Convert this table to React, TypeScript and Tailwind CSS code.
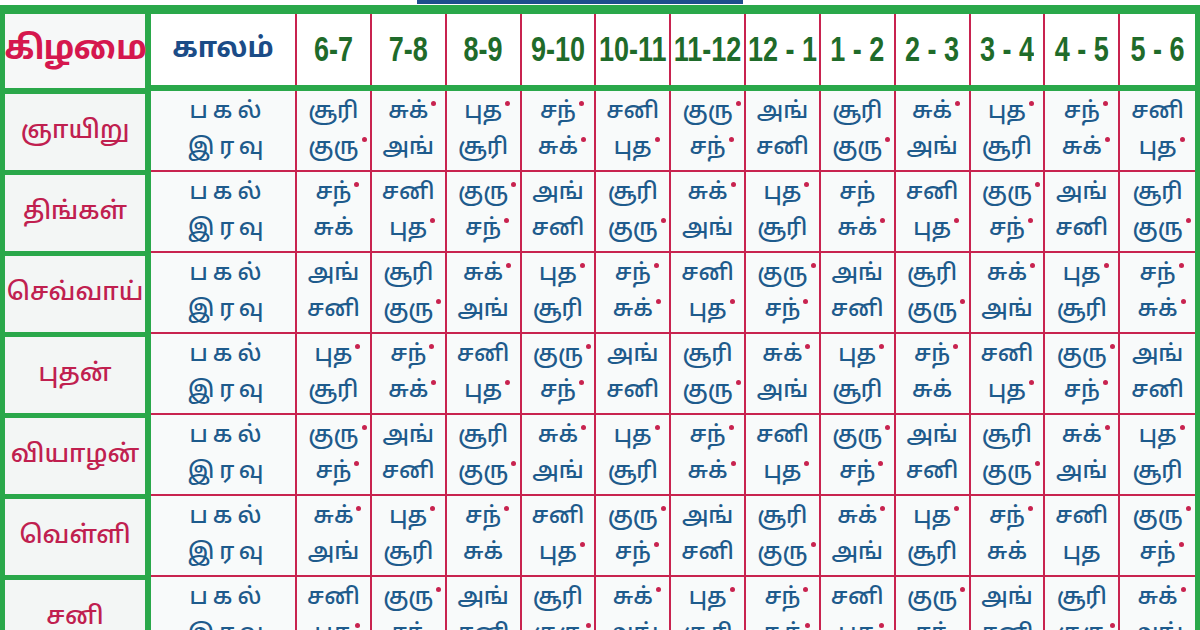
const hours = ['6-7', '7-8', '8-9', '9-10', '10-11', '11-12', '12 - 1', '1 - 2', '2 - 3', '3 - 4', '4 - 5', '5 - 6']

// "*" marks a red dot after the planet name
const rows: { day: string; pagal: string[]; iravu: string[] }[] = [
  {
    day: 'ஞாயிறு',
    pagal: ['சூரி', 'சுக்*', 'புத*', 'சந்*', 'சனி', 'குரு*', 'அங்', 'சூரி', 'சுக்*', 'புத*', 'சந்*', 'சனி'],
    iravu: ['குரு*', 'அங்', 'சூரி', 'சுக்*', 'புத*', 'சந்*', 'சனி', 'குரு*', 'அங்', 'சூரி', 'சுக்*', 'புத*'],
  },
  {
    day: 'திங்கள்',
    pagal: ['சந்*', 'சனி', 'குரு*', 'அங்', 'சூரி', 'சுக்*', 'புத*', 'சந்', 'சனி', 'குரு*', 'அங்', 'சூரி'],
    iravu: ['சுக்', 'புத*', 'சந்*', 'சனி', 'குரு*', 'அங்', 'சூரி', 'சுக்*', 'புத*', 'சந்*', 'சனி', 'குரு*'],
  },
  {
    day: 'செவ்வாய்',
    pagal: ['அங்', 'சூரி', 'சுக்*', 'புத*', 'சந்*', 'சனி', 'குரு*', 'அங்', 'சூரி', 'சுக்*', 'புத*', 'சந்*'],
    iravu: ['சனி', 'குரு*', 'அங்', 'சூரி', 'சுக்*', 'புத*', 'சந்*', 'சனி', 'குரு*', 'அங்', 'சூரி', 'சுக்*'],
  },
  {
    day: 'புதன்',
    pagal: ['புத*', 'சந்*', 'சனி', 'குரு*', 'அங்', 'சூரி', 'சுக்*', 'புத*', 'சந்*', 'சனி', 'குரு*', 'அங்'],
    iravu: ['சூரி', 'சுக்*', 'புத*', 'சந்*', 'சனி', 'குரு*', 'அங்', 'சூரி', 'சுக்', 'புத*', 'சந்*', 'சனி'],
  },
  {
    day: 'வியாழன்',
    pagal: ['குரு*', 'அங்', 'சூரி', 'சுக்*', 'புத*', 'சந்*', 'சனி', 'குரு*', 'அங்', 'சூரி', 'சுக்*', 'புத*'],
    iravu: ['சந்*', 'சனி', 'குரு*', 'அங்', 'சூரி', 'சுக்*', 'புத*', 'சந்*', 'சனி', 'குரு*', 'அங்', 'சூரி'],
  },
  {
    day: 'வெள்ளி',
    pagal: ['சுக்*', 'புத*', 'சந்*', 'சனி', 'குரு*', 'அங்', 'சூரி', 'சுக்*', 'புத*', 'சந்*', 'சனி', 'குரு*'],
    iravu: ['அங்', 'சூரி', 'சுக்', 'புத*', 'சந்*', 'சனி', 'குரு*', 'அங்', 'சூரி', 'சுக்', 'புத', 'சந்*'],
  },
  {
    day: 'சனி',
    pagal: ['சனி', 'குரு*', 'அங்', 'சூரி', 'சுக்*', 'புத*', 'சந்*', 'சனி', 'குரு*', 'அங்', 'சூரி', 'சுக்*'],
    iravu: ['புத*', 'சந்', 'சனி', 'குரு*', 'அங்', 'சூரி', 'சுக்*', 'புத*', 'சந்', 'சனி', 'குரு*', 'அங்'],
  },
]

function Planet({ name }: { name: string }) {
  const dot = name.endsWith('*')
  return (
    <span className="relative inline-block">
      {dot ? name.slice(0, -1) : name}
      {dot && (
        <span className="absolute -right-[8px] top-[6px] h-[5px] w-[5px] rounded-full bg-[#c8234f]" />
      )}
    </span>
  )
}

export default function App() {
  return (
    <div className="h-[630px] w-[1200px] overflow-hidden bg-white font-['Noto_Sans_Tamil','Lohit_Tamil','Noto_Sans',sans-serif]">
      {/* top banner edge */}
      <div className="flex h-[5px]">
        <div className="ml-[417px] h-[4px] w-[326px] bg-[#1d4e8c]" />
      </div>

      <div className="flex border-x-[5px] border-t-[9px] border-[#2aa84a] bg-[#2aa84a]">
        {/* day column */}
        <div className="flex w-[141px] flex-col gap-[5px] bg-[#2aa84a] pr-[1px]">
          <div className="mb-[1px] flex h-[74px] items-center justify-center bg-[#f6f8f8] text-[33px] font-bold tracking-[-1px] text-[#d5174e]">
            கிழமை
          </div>
          {rows.map((r) => (
            <div
              key={r.day}
              className="flex h-[76px] shrink-0 items-center justify-center bg-[#f3f6f5] text-[25px] font-medium text-[#c0204f]"
            >
              {r.day}
            </div>
          ))}
        </div>

        {/* hours table */}
        <div className="ml-[5px] flex flex-1 flex-col bg-[#f8fafa]">
          <div className="grid h-[77px] grid-cols-[146px_repeat(12,1fr)] border-b-[6px] border-[#2aa84a] bg-white">
            <div className="flex items-center justify-center border-r-2 border-[#c8234f] text-[28px] font-bold text-[#1b4c87]">
              காலம்
            </div>
            {hours.map((h, i) => (
              <div
                key={h}
                className={`flex items-center justify-center ${i < 11 ? 'border-r-2 border-[#c8234f]' : ''}`}
              >
                <span className="inline-block scale-y-[1.3] font-['Liberation_Sans_Narrow','Liberation_Sans',sans-serif] text-[27px] font-bold text-[#1f6b2a]">
                  {h}
                </span>
              </div>
            ))}
          </div>

          {rows.map((r) => (
            <div
              key={r.day}
              className="grid h-[81px] shrink-0 grid-cols-[146px_repeat(12,1fr)] border-b-2 border-[#c8234f] text-[23px] font-medium leading-[36px] text-[#1e5b8c]"
            >
              <div className="flex flex-col items-center justify-center border-r-2 border-[#c8234f] pl-[10px] tracking-[5px]">
                <span>பகல்</span>
                <span>இரவு</span>
              </div>
              {r.pagal.map((p, i) => (
                <div
                  key={i}
                  className={`flex flex-col items-center justify-center ${i < 11 ? 'border-r-2 border-[#c8234f]' : ''}`}
                >
                  <Planet name={p} />
                  <Planet name={r.iravu[i]} />
                </div>
              ))}
            </div>
          ))}
        </div>
      </div>
    </div>
  )
}
